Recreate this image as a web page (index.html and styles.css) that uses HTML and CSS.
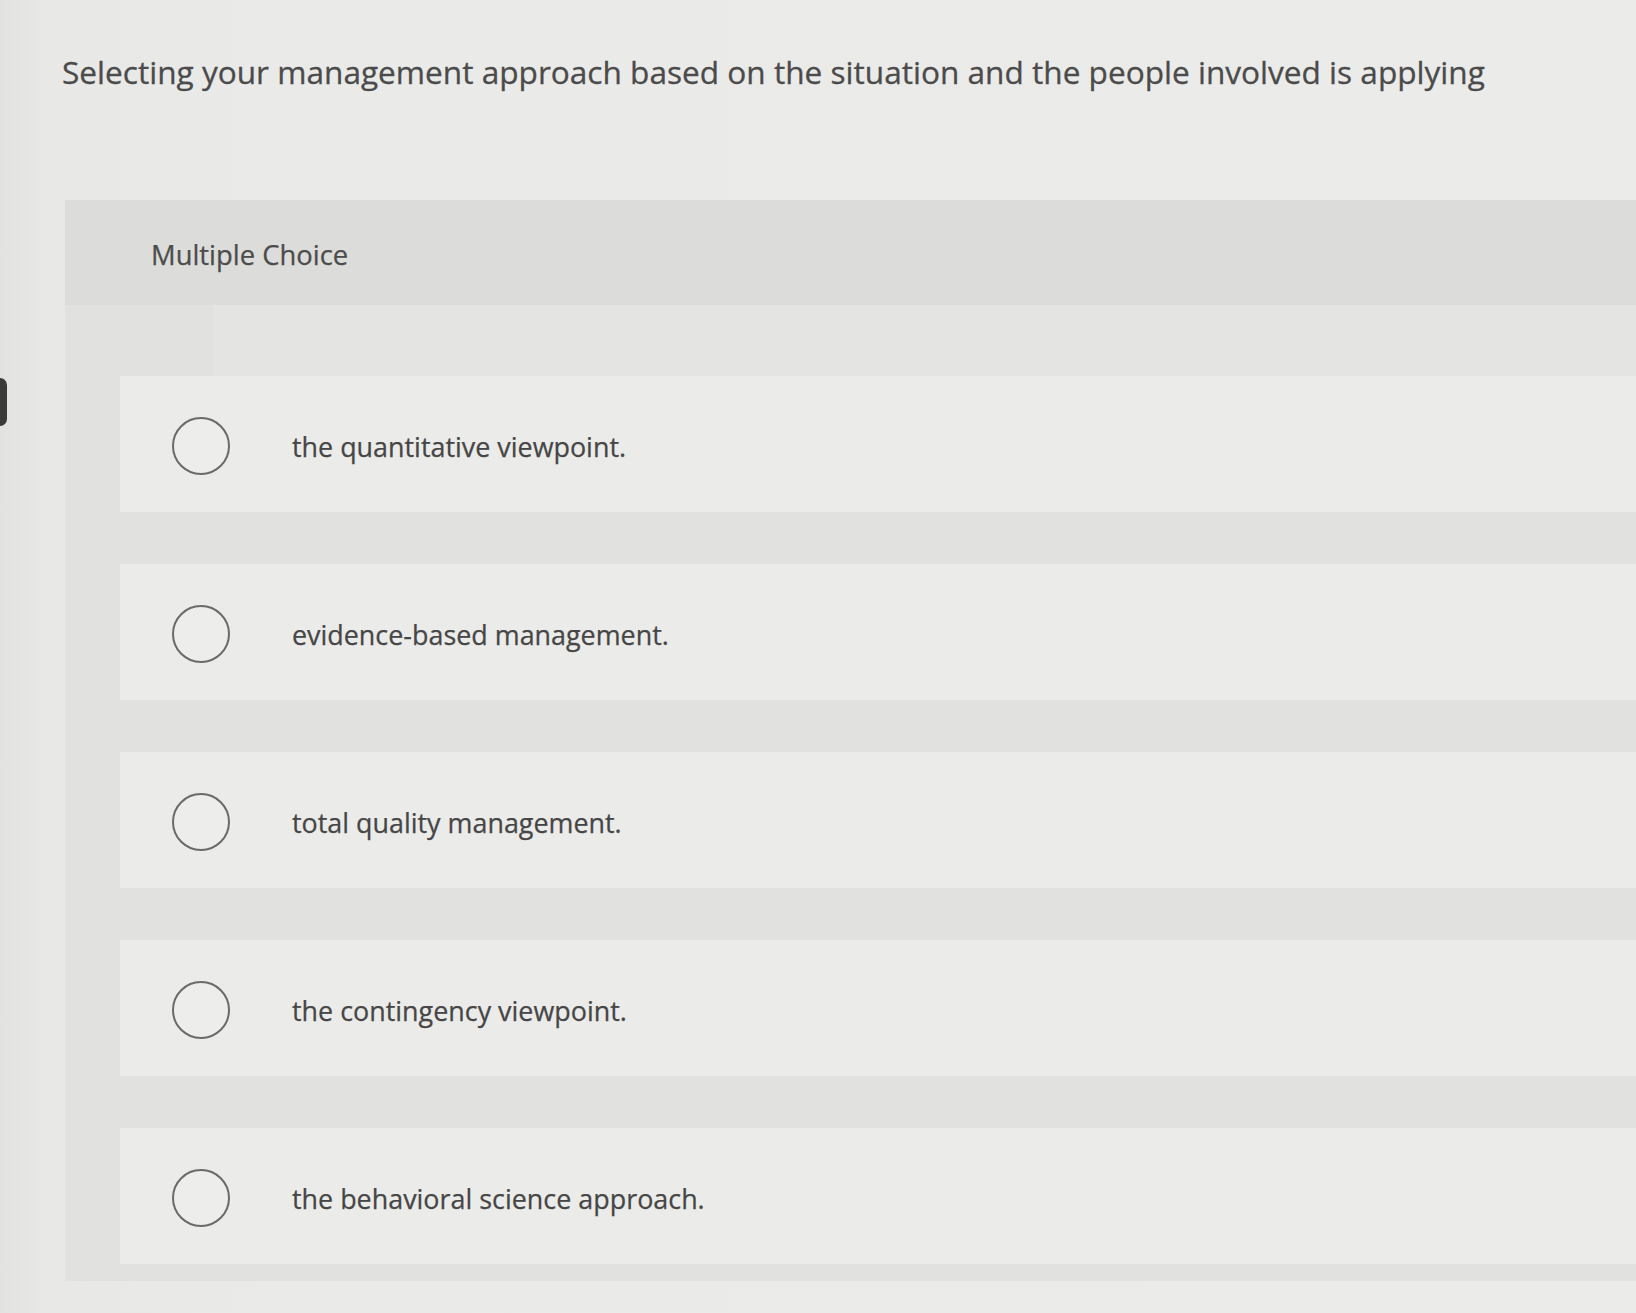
FILE: index.html
```html
<!DOCTYPE html>
<html lang="en">
<head>
<meta charset="utf-8">
<title>Multiple Choice</title>
<link rel="stylesheet" href="styles.css">
</head>
<body>
<div class="bezel"></div>
<main class="page">
  <h1 class="question">Selecting your management approach based on the situation and the people involved is applying</h1>
  <section class="panel">
    <div class="panel-head">Multiple Choice</div>
    <div class="intro"></div>
    <ul class="options">
      <li class="option"><span class="radio"></span><span class="label">the quantitative viewpoint.</span></li>
      <li class="option"><span class="radio"></span><span class="label">evidence-based management.</span></li>
      <li class="option"><span class="radio"></span><span class="label">total quality management.</span></li>
      <li class="option"><span class="radio"></span><span class="label">the contingency viewpoint.</span></li>
      <li class="option"><span class="radio"></span><span class="label">the behavioral science approach.</span></li>
    </ul>
  </section>
</main>
</body>
</html>
```

FILE: styles.css
```css
html {
  background: #e9e9e7;
}
body {
  margin: 0;
  min-height: 1313px;
  overflow: hidden;
  background: linear-gradient(90deg, #e2e2e0 0px, #e8e8e6 45px, #eaeae8 300px, #ebebe9 100%);
  font-family: "Open Sans", "Liberation Sans", sans-serif;
  color: #4a4a4a;
}
.page {
  display: flex;
  flex-direction: column;
}
.question {
  margin: 0;
  padding: 52px 0 0 62px;
  font-size: 31.6px;
  line-height: 40px;
  font-weight: 400;
  -webkit-text-stroke: 0.3px currentColor;
  color: #4b4b4b;
  white-space: nowrap;
}
.panel {
  margin: 108px 0 0 65px;
  background: #e1e1df;
  padding-bottom: 17px;
}
.panel-head {
  height: 105px;
  padding-top: 4px;
  box-sizing: border-box;
  display: flex;
  align-items: center;
  padding-left: 86px;
  background: #dcdcda;
  font-size: 27.4px;
  -webkit-text-stroke: 0.25px currentColor;
  color: #4c4c4c;
}
.intro {
  height: 71px;
  margin-left: 148px;
  background: #e4e4e2;
}
.options {
  list-style: none;
  margin: 0;
  padding: 0 0 0 55px;
  display: flex;
  flex-direction: column;
  gap: 52px;
}
.option {
  height: 136px;
  box-sizing: border-box;
  padding-top: 4px;
  display: flex;
  align-items: center;
  gap: 62px;
  padding-left: 52px;
  background: #ebebe9;
}
.radio {
  flex: none;
  width: 58px;
  height: 58px;
  box-sizing: border-box;
  border: 2px solid #6a6a6a;
  border-radius: 50%;
  background: #ededeb;
}
.label {
  font-size: 26.9px;
  -webkit-text-stroke: 0.25px currentColor;
  color: #464646;
  white-space: nowrap;
}
.bezel {
  position: absolute;
  left: 0;
  top: 378px;
  width: 7px;
  height: 48px;
  background: #3a3a3a;
  border-radius: 0 8px 8px 0;
}
```
